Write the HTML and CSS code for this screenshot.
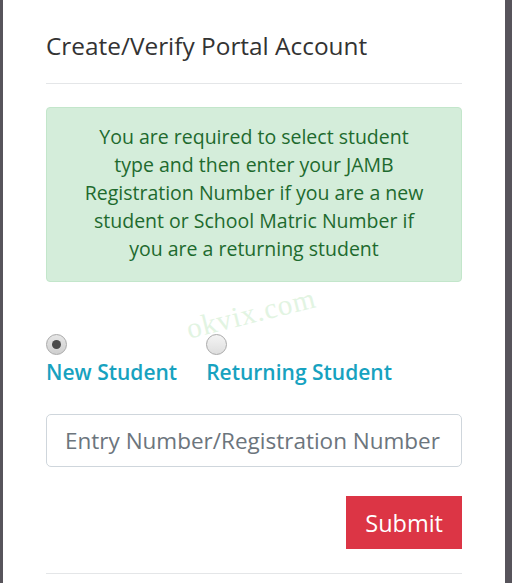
FILE: index.html
```html
<!DOCTYPE html>
<html lang="en">
<head>
    <meta charset="UTF-8">
    <meta name="viewport" content="width=device-width, initial-scale=1.0">
    <title>Create/Verify Portal Account</title>
    <link rel="stylesheet" href="styles.css">
</head>
<body>

    <div class="modal">
        <div class="modal-header">
            <h4>Create/Verify Portal Account</h4>
        </div>

        <div class="modal-body">
            <div class="alert">
                You are required to select student type and then enter your JAMB Registration Number if you are a new student or School Matric Number if you are a returning student
            </div>

            <span class="watermark">okvix.com</span>

            <form id="verify-form">
                <div class="student-type">
                    <label class="radio">
                        <input type="radio" name="type" value="new" checked>
                        <span>New Student</span>
                    </label>
                    <label class="radio">
                        <input type="radio" name="type" value="returning">
                        <span>Returning Student</span>
                    </label>
                </div>

                <input type="text" class="form-control" name="regno" placeholder="Entry Number/Registration Number">

                <div class="actions">
                    <button type="submit">Submit</button>
                </div>
            </form>
        </div>

        <div class="modal-footer"></div>
    </div>

</body>
</html>
```

FILE: styles.css
```css
html, body {
    height: 100%;
}

body {
    font-family: "Open Sans", Arial, sans-serif;
    background-color: #57545b;
    margin: 0;
    overflow: hidden;
}

.modal {
    margin: 0 7px 0 3px;
    height: 100%;
    padding: 0 43px;
    background-color: #fff;
    position: relative;
}

.modal-header {
    padding-top: 30px;
    padding-bottom: 22px;
    border-bottom: 1px solid #e4e6e8;
}

.modal-header h4 {
    margin: 0;
    font-size: 24.4px;
    font-weight: 400;
    line-height: 31px;
    color: #333;
}

.modal-body {
    padding-top: 23px;
}

.alert {
    padding: 15px 32px 18px;
    background-color: #d4edda;
    border: 1px solid #c3e6cb;
    border-radius: 4px;
    color: #1e6a2e;
    font-size: 19.5px;
    line-height: 28px;
    text-align: center;
}

.watermark {
    position: absolute;
    left: 182px;
    top: 297px;
    font-family: "Liberation Serif", serif;
    font-size: 29px;
    letter-spacing: 1px;
    color: #e2f4e2;
    transform: rotate(-14deg);
}

.student-type {
    display: flex;
    gap: 29px;
    margin-top: 52px;
}

.radio {
    display: flex;
    flex-direction: column;
    align-items: flex-start;
    cursor: pointer;
}

.radio input {
    appearance: none;
    width: 21px;
    height: 21px;
    margin: 0 0 4px;
    border: 1px solid #a9a9a9;
    border-radius: 50%;
    background: linear-gradient(#f4f4f4, #dedede);
    position: relative;
}

.radio input:checked {
    background: linear-gradient(#e6e6e6, #cfcfcf);
}

.radio input:checked::after {
    content: "";
    position: absolute;
    left: 5px;
    top: 5px;
    width: 9px;
    height: 9px;
    border-radius: 50%;
    background-color: #4a4a4a;
}

.radio span {
    font-size: 21px;
    font-weight: 600;
    color: #17a2c0;
    line-height: 26px;
}

.form-control {
    display: block;
    box-sizing: border-box;
    width: 100%;
    height: 53px;
    margin-top: 29px;
    padding: 0 18px;
    border: 1px solid #cfd6dc;
    border-radius: 5px;
    font-family: inherit;
    font-size: 22.5px;
    color: #495057;
}

.form-control::placeholder {
    color: #6c757d;
}

.actions {
    display: flex;
    justify-content: flex-end;
    margin-top: 29px;
}

button {
    height: 53px;
    padding: 0 19px;
    background-color: #dc3545;
    color: #fff;
    border: none;
    font-family: inherit;
    font-size: 23.5px;
    cursor: pointer;
}

.modal-footer {
    margin-top: 24px;
    border-top: 1px solid #e4e6e8;
}
```
